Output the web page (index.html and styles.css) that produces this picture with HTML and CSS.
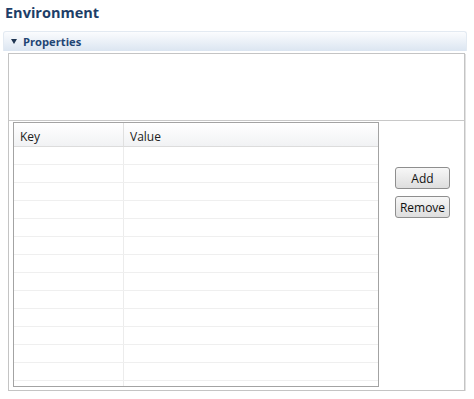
FILE: index.html
```html
<!DOCTYPE html>
<html lang="en">
<head>
  <meta charset="UTF-8" />
  <title>Environment</title>
  <link rel="stylesheet" href="styles.css">
</head>
<body>

  <h1 class="title">Environment</h1>

  <div class="section">
    <div class="section-head"><span class="twisty"></span>Properties</div>
    <div class="section-body">
      <div class="blank"></div>
      <div class="props">
        <div class="table">
          <div class="row head">
            <div class="cell key">Key</div>
            <div class="cell">Value</div>
          </div>
          <div class="row"><div class="cell key"></div><div class="cell"></div></div>
          <div class="row"><div class="cell key"></div><div class="cell"></div></div>
          <div class="row"><div class="cell key"></div><div class="cell"></div></div>
          <div class="row"><div class="cell key"></div><div class="cell"></div></div>
          <div class="row"><div class="cell key"></div><div class="cell"></div></div>
          <div class="row"><div class="cell key"></div><div class="cell"></div></div>
          <div class="row"><div class="cell key"></div><div class="cell"></div></div>
          <div class="row"><div class="cell key"></div><div class="cell"></div></div>
          <div class="row"><div class="cell key"></div><div class="cell"></div></div>
          <div class="row"><div class="cell key"></div><div class="cell"></div></div>
          <div class="row"><div class="cell key"></div><div class="cell"></div></div>
          <div class="row"><div class="cell key"></div><div class="cell"></div></div>
          <div class="row"><div class="cell key"></div><div class="cell"></div></div>
          <div class="row"><div class="cell key"></div><div class="cell"></div></div>
        </div>
        <div class="buttons">
          <button>Add</button>
          <button>Remove</button>
        </div>
      </div>
    </div>
  </div>

</body>
</html>
```

FILE: styles.css
```css
body {
  margin: 0;
  background: #ffffff;
  font-family: 'Open Sans', 'Noto Sans', sans-serif;
  font-size: 12px;
  color: #222;
}

.title {
  margin: 0;
  padding: 2px 5px 0 5px;
  font-size: 14.5px;
  line-height: 22px;
  font-weight: bold;
  color: #1d3e68;
}

.section {
  margin-top: 7px;
}

.section-head {
  display: flex;
  align-items: center;
  margin: 0 7px 0 3px;
  height: 19px;
  padding-left: 7px;
  border: 1px solid #e3eaf2;
  border-bottom: none;
  border-radius: 3px 3px 0 0;
  background: linear-gradient(#fbfcfe, #dbe5f1);
  font-size: 11.2px;
  font-weight: bold;
  color: #1f4574;
}

.twisty {
  width: 0;
  height: 0;
  margin-right: 6px;
  border-left: 3.5px solid transparent;
  border-right: 3.5px solid transparent;
  border-top: 5px solid #1f3552;
}

.section-body {
  margin: 2px 0 0 8px;
  width: 455px;
  border: 1px solid #c4c4c4;
  box-shadow: 1px 1px 0 #e2e2e2;
}

.blank {
  height: 66px;
}

.props {
  display: flex;
  align-items: flex-start;
  border-top: 1px solid #c8c8c8;
  padding: 1px 0 3px 4px;
}

.table {
  width: 364px;
  height: 263px;
  overflow: hidden;
  border: 1px solid #a3a3a3;
}

.row {
  display: flex;
  height: 18px;
  border-bottom: 1px solid #efefef;
  box-sizing: border-box;
}

.row.head {
  height: 24px;
  border-bottom: 1px solid #dcdcdc;
  background: linear-gradient(#ffffff, #f1f2f4);
}

.cell {
  flex: 1;
  padding: 2px 0 0 6px;
  line-height: 23px;
}

.cell.key {
  flex: none;
  width: 103px;
  border-right: 1px solid #ececec;
}

.head .cell.key {
  border-right-color: #e0e0e0;
}

.buttons {
  display: flex;
  flex-direction: column;
  gap: 7px;
  margin: 45px 0 0 16px;
}

button {
  width: 55px;
  height: 22px;
  padding: 0;
  border: 1px solid #8e8e8e;
  border-radius: 3px;
  background: linear-gradient(#f7f7f7, #dedede);
  font-family: 'Open Sans', 'Noto Sans', sans-serif;
  font-size: 12px;
  color: #111;
}
```
